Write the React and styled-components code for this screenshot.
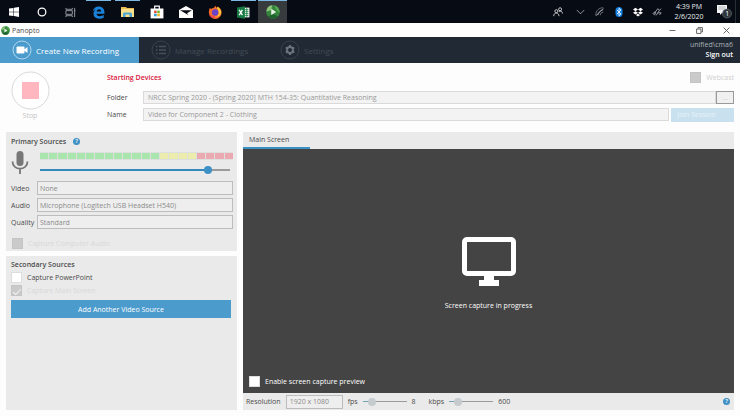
import React from "react";
import styled, { createGlobalStyle } from "styled-components";

const Global = createGlobalStyle`
  * { box-sizing: border-box; }
  body { margin: 0; background: #fdfdfd; }
  body, button, input, select {
    font-family: "Open Sans", "Noto Sans", sans-serif;
    font-size: 7px;
    color: #4a4a4a;
  }
  button { border: 0; padding: 0; background: none; }
`;

const Desktop = styled.div`
  min-height: 100vh;
  display: flex;
  flex-direction: column;
`;

/* ---- system taskbar ---- */
const Taskbar = styled.header`
  height: 23px;
  display: flex;
  background: #070c14;
`;
const TaskButton = styled.button`
  width: ${(p) => (p.$narrow ? 28 : 29)}px;
  display: grid;
  place-items: center;
  border-top: 1px solid transparent;
  border-image: ${(p) =>
    p.$active
      ? "linear-gradient(#7bb9e2, #7bb9e2) 1"
      : p.$running
      ? "linear-gradient(90deg, transparent 10%, #7bb9e2 10% 90%, transparent 90%) 1"
      : "none"};
  background: ${(p) => (p.$active ? "#373b3e" : "none")};
`;
const Tray = styled.div`
  margin-left: auto;
  display: flex;
  align-items: stretch;
`;
const TrayButton = styled.button`
  width: ${(p) => (p.$wide ? 26 : 19)}px;
  display: grid;
  place-items: center;
`;
const Clock = styled.time`
  width: 46px;
  padding-top: 2px;
  color: #e8eaec;
  line-height: 10px;
  text-align: center;
`;
const Notices = styled.button`
  width: 24px;
  display: grid;
  place-items: center;
  margin-right: 4px;
  border-right: 1px solid #2a2e35;
`;

/* ---- window chrome ---- */
const TitleBar = styled.div`
  height: 14px;
  display: flex;
  align-items: center;
  gap: 2px;
  padding: 0 9px 0 1px;
  background: #fff;
`;
const WindowButtons = styled.div`
  margin-left: auto;
  display: flex;
  gap: 17px;
`;
const WindowButton = styled.button`
  width: 10px;
  height: 10px;
  display: grid;
  place-items: center;
`;

const Nav = styled.nav`
  height: 26px;
  display: flex;
  background: #212a34;
`;
const NavTab = styled.button`
  display: flex;
  align-items: center;
  gap: 4px;
  width: ${(p) => p.$width}px;
  padding-left: 12px;
  font-size: 8px;
  background: ${(p) => (p.$active ? "#4b9bcd" : "none")};
  color: ${(p) => (p.$active ? "#fff" : "#414b55")};
`;
const Account = styled.div`
  margin-left: auto;
  padding: 3px 7px 0 0;
  display: flex;
  flex-direction: column;
  align-items: flex-end;
  color: #a9b0b7;
  line-height: 10px;
`;
const SignOut = styled.a`
  color: #fff;
  font-weight: 600;
  text-decoration: none;
`;

/* ---- recording details ---- */
const Details = styled.section`
  display: grid;
  grid-template-columns: 50px 1fr;
  column-gap: 46px;
  padding: 8px 6px 0 5px;
`;
const StopButton = styled.button`
  display: flex;
  flex-direction: column;
  align-items: center;
  gap: 1px;
  color: #c4c4c4;
`;
const DetailForm = styled.div`
  display: flex;
  flex-direction: column;
  gap: 4px;
`;
const StatusRow = styled.div`
  height: 12px;
  display: flex;
  align-items: center;
  justify-content: space-between;
  margin-bottom: 4px;
  padding-left: 6px;
`;
const Status = styled.strong`
  color: #d9173c;
  font-weight: 600;
`;
const DetailRow = styled.div`
  height: 13px;
  display: flex;
  align-items: center;
  gap: 2px;
  padding-left: 6px;
`;
const DetailLabel = styled.label`
  width: 34px;
`;
const control = `
  appearance: none;
  min-width: 0;
  height: 13px;
  margin: 0;
  padding: 0 4px;
  border: 1px solid #dadada;
  border-radius: 0;
  background: #f3f3f3;
  color: #999;
  opacity: 1;
`;
const TextBox = styled.input`
  ${control}
  flex: 1;
`;
const Picker = styled.select`
  ${control}
  flex: 1;
  margin-right: ${(p) => (p.$joined ? -2 : 0)}px;
`;
const BrowseButton = styled.button`
  width: 18px;
  height: 13px;
  border: 1px solid #999;
  background: #f0f0f0;
  color: #c8c8c8;
`;
const JoinButton = styled.button`
  width: 63px;
  height: 14px;
  padding-right: 12px;
  background: #c9e1ef;
  color: #e7f2f8;
`;

const CheckLine = styled.label`
  display: flex;
  align-items: center;
  gap: 5px;
  color: ${(p) => (p.$light ? "#fff" : p.$off ? p.$tone || "#d8d8d8" : "#4a4a4a")};
`;
const Tick = styled.input.attrs({ type: "checkbox" })`
  appearance: none;
  width: 11px;
  height: 11px;
  margin: 0;
  display: grid;
  place-items: center;
  border: 1px solid #ddd;
  background: #fff;
  &:disabled { background: #cacaca; border-color: #c4c4c4; }
  &:checked::after {
    content: "";
    width: 7px;
    height: 3px;
    border: solid #f3f3f3;
    border-width: 0 0 1px 1px;
    transform: rotate(-45deg);
  }
`;

/* ---- main area ---- */
const Workspace = styled.main`
  flex: 1;
  display: grid;
  grid-template-columns: minmax(200px, 231fr) 491fr;
  gap: 6px;
  padding: 11px 6px 6px;
`;
const Sources = styled.div`
  display: flex;
  flex-direction: column;
  gap: 5px;
`;
const Panel = styled.section`
  flex: ${(p) => (p.$grow ? 1 : "none")};
  padding: ${(p) => (p.$grow ? "3px 6px 6px 5px" : "4px 4px 2px 5px")};
  background: #eaeaea;
`;
const Heading = styled.h2`
  display: flex;
  align-items: center;
  gap: 7px;
  margin: 0;
  font-size: 7px;
  line-height: 11px;
  font-weight: 600;
`;
const AudioLevels = styled.div`
  display: grid;
  grid-template-columns: 25px 1fr;
  column-gap: 4px;
  align-items: center;
  padding-top: 4px;
  margin-bottom: 6px;
`;
const LevelColumn = styled.div`
  display: flex;
  flex-direction: column;
  gap: 5px;
`;
const Meter = styled.div`
  display: flex;
  gap: 1px;
  height: 8px;
  padding: 1px 0;
  background: #dcdfdc;
`;
const shades = { low: "#a9e6ae", mid: "#ecedac", high: "#eba9b2" };
const Segment = styled.span`
  flex: 1;
  background: ${(p) => shades[p.$level]};
`;
const Slider = styled.input.attrs({ type: "range" })`
  appearance: none;
  width: ${(p) => p.$width || "calc(100% - 3px)"};
  height: 10px;
  margin: 0;
  background: linear-gradient(
      90deg,
      ${(p) => (p.$muted ? "#73a1b8" : "#3689bd")} ${(p) => p.$fill}%,
      #9b9b9b ${(p) => p.$fill}%
    )
    center / 100% ${(p) => (p.$muted ? 1 : 2)}px no-repeat;
  &::-webkit-slider-thumb {
    appearance: none;
    width: 8px;
    height: 8px;
    border-radius: 50%;
    background: ${(p) => (p.$muted ? "#c5cbce" : "#3e91c7")};
  }
`;
const SourceRow = styled.div`
  display: grid;
  grid-template-columns: 26px 1fr;
  align-items: center;
  margin-bottom: 3px;
`;
const SourcePicker = styled(Picker)`
  height: 14px;
  padding: 0 2px;
  border-color: #bdbdbd;
  background: #eee;
  color: #8b8b8b;
`;
const SourceOption = styled.div`
  display: flex;
  padding: ${(p) => (p.$spaced ? "6px 1px 0" : "2px 0 0")};
`;
const AddButton = styled.button`
  width: 100%;
  height: 18px;
  margin-top: 4px;
  background: #4b9bcd;
  color: #fff;
`;

const Preview = styled.section`
  display: flex;
  flex-direction: column;
  background: #eaeaea;
`;
const Tabs = styled.div`
  height: 17px;
  display: flex;
`;
const ScreenTab = styled.button`
  width: 67px;
  padding-left: 6px;
  text-align: left;
  border-bottom: 2px solid #3b91c4;
`;
const Stage = styled.div`
  flex: 1;
  display: grid;
  grid-template-rows: 1fr auto;
  padding: 22px 6px 6px;
  background: #444;
  color: #fff;
`;
const StageMessage = styled.div`
  display: flex;
  flex-direction: column;
  align-items: center;
  justify-content: center;
  gap: 15px;
`;
const Settings = styled.div`
  height: 17px;
  display: flex;
  align-items: center;
  gap: 5px;
  padding: 0 4px 0 3px;
`;
const Resolution = styled(SourcePicker)`
  flex: none;
  width: 57px;
  padding: 0 3px;
`;
const Value = styled.output`
  width: 12px;
`;
const HelpButton = styled.button`
  width: 7px;
  height: 7px;
  border-radius: 50%;
  background: #3f90c4;
  color: #fff;
  font-size: 6px;
  line-height: 7px;
  font-weight: 600;
`;
const HelpEnd = styled.div`
  margin-left: auto;
  display: flex;
`;

/* ---- icons ---- */
const Icon = ({ w = 12, h = w, box = "0 0 12 12", children }) => (
  <svg width={w} height={h} viewBox={box} fill="none" aria-hidden="true">{children}</svg>
);
const WindowsIcon = () => (
  <Icon w={10} box="0 0 10 10"><path fill="#fff" d="M0 1.5 4.5.9v3.8H0zM5 .8 10 .1v4.6H5zM0 5.2h4.5V9L0 8.4zM5 5.2h5v4.7L5 9.1z" /></Icon>
);
const CircleIcon = () => <Icon w={10}><circle cx="6" cy="6" r="4.6" stroke="#fff" strokeWidth="1.5" /></Icon>;
const TaskViewIcon = () => (
  <Icon w={11}><path stroke="#9ba0a5" d="M1 1v1.5h7V1M1 11V9.5h7V11M1 4h7v4H1zM10.5 1v10M9.8 4.2h1.6" /></Icon>
);
const EdgeIcon = () => (
  <Icon w={13}><path fill="#1b82d9" d="M.6 5.4C1.200 2 3.500.4 6.200.4c3.300 0 5.300 2.400 5.300 5.400v1.300H4.200c.2 1.700 1.500 2.300 3.100 2.300 1.300 0 2.500-.4 3.500-1v2.400c-1.200.6-2.600.9-4 .9C3.600 11.700 1.400 10 1.400 7.200c0-1.800.9-3.300 2.500-4.200C2.300 3.300 1.200 4.300.6 5.400zM4.300 5h4.200c0-1.300-.7-2.100-2-2.100S4.500 3.800 4.300 5z" /></Icon>
);
const FolderIcon = () => (
  <Icon w={13} h={11} box="0 0 13 11"><path fill="#e9bd54" d="M0 0h5l1 1h7v4H0z" /><path fill="#f9e08c" d="M0 2h13v8H0z" /><path fill="#4ea5d4" d="M2 10V6.500L3 5.500h7l1 1V10H8.500V7.500h-4V10z" /></Icon>
);
const StoreIcon = () => (
  <Icon w={14}><path stroke="#fff" d="M4 3.500V1h4v2.500" /><path fill="#fff" d="M.5 3h11v8.500H.5z" /><path fill="#e55033" d="M3.500 4.800h2.200V7H3.500z" /><path fill="#72b52a" d="M6.200 4.800h2.200V7H6.200z" /><path fill="#2a9ed8" d="M3.500 7.500h2.200v2.200H3.500z" /><path fill="#f4b51d" d="M6.200 7.500h2.200v2.200H6.200z" /></Icon>
);
const MailIcon = () => (
  <Icon w={14} h={12} box="0 0 14 12"><path fill="#fff" d="M0 4 7 0l7 4v8H0z" /><path fill="#070c14" d="M1 4.200h12L8 7.300l1.700 1.900L5.800 7z" /></Icon>
);
const FirefoxIcon = () => (
  <Icon w={14}><path fill="#f56b2a" d="M1.500 2.500 2.700 3.400C3.500 2.800 4 2.600 4.800 2.500L6.500.6c.3 1 .8 1.600 1.600 2 .4-.4.3-1 .2-1.400 2.200 1.100 3.400 3.100 3.400 5.300a5.500 5.500 0 0 1-11 0c0-1.500.3-2.900.8-4z" /><circle cx="6.200" cy="6.500" r="2.800" fill="#6b43c8" /><path fill="#ffcb38" d="M7.800 1.200c2.100 1.200 3.600 3 3.400 5.500-.5 2.600-3.100 3.900-5.600 3.200 2.600-.3 4-1.700 3.600-4-.2-1.600-1.600-2.300-1.400-4.700z" /><path fill="#e53464" d="M.8 7c1 2.400 3.200 3.200 5.600 2.900C4.500 12.300 1.200 10 .8 7z" /></Icon>
);
const ExcelIcon = () => (
  <Icon w={13}><path fill="#e9f3ec" d="M6 1.500h5.500v9H6z" /><path stroke="#21834a" strokeWidth=".8" d="M7.500 3.400h3M7.500 5.200h3M7.500 7h3M7.500 8.800h3M9 2v8" /><path fill="#177943" d="M0 1.400 7.300.2v11.600L0 10.600z" /><path stroke="#fff" strokeWidth="1.200" d="m2 3.600 3 4.800M5 3.600 2 8.400" /></Icon>
);
const PanoptoIcon = ({ size }) => (
  <Icon w={size}><circle cx="6" cy="6" r="5.800" fill="#36853d" /><path fill="#8cc47a" d="M5.500.2A5.800 5.800 0 0 0 .3 5.600l4-1.200z" /><path fill="#1e602e" d="M1.500 9.700a5.800 5.800 0 0 0 8.800.2L6.500 8z" /><path fill="#55a850" d="M7 .3a5.800 5.800 0 0 1 4.700 6.300L8.800 4z" /><path fill="#e8f3e5" d="m4.500 3.300 4.200 2.800-4.200 2.500z" /></Icon>
);
const PeopleIcon = () => (
  <Icon w={10}><g stroke="#e3e5e7"><circle cx="4" cy="5" r="1.800" /><path d="M.8 11c0-5 6.400-5 6.400 0M7 5.500c2-1.500 4.300-.5 4.300 2.300" /><circle cx="8.500" cy="2.700" r="1.800" /></g></Icon>
);
const ChevronIcon = () => <Icon w={9}><path stroke="#bfc3c6" d="m1 4 5 5 5-5" /></Icon>;
const WifiIcon = () => (
  <Icon w={9}><g stroke="#858b91"><path d="M1 11C1 5 5 1 11 1M4 11c0-4 3-7 7-7M7 11c0-2.500 1.500-4 4-4" /><path stroke="#d0d3d5" d="M1 11h1l9-9" /></g></Icon>
);
const BluetoothIcon = () => (
  <Icon w={8} h={10} box="0 0 8 10"><rect width="7" height="10" x=".5" rx="3.500" fill="#1683e3" /><path stroke="#fff" strokeWidth=".8" d="m2 3 4 4-2 1.700V1.300L6 3 2 7" /></Icon>
);
const DropboxIcon = () => (
  <Icon w={10}><path fill="#fff" d="m3 1 3 2-3 2-3-2zM9 1l3 2-3 2-3-2zM3 5l3 2-3 2-3-2zM9 5l3 2-3 2-3-2zM6 8l2.500 1.600L6 11.300 3.500 9.600z" /></Icon>
);
const PenIcon = () => (
  <Icon w={10}><path stroke="#b3b7bb" d="M1 8c2-3 4-2 3 0s-2 2-1.500 0L7 2l2 2-4 6M7 7h4l-2 2.500M9 4l2-2" /></Icon>
);
const NoticeIcon = () => (
  <Icon w={16} h={15} box="0 0 16 15"><path fill="#f4f5f6" d="M1 1h10v8H6l-2 2V9H1z" /><path stroke="#8e9398" strokeWidth=".7" d="M2.500 3h7M2.500 5h7" /><circle cx="11" cy="9.500" r="4.500" fill="#30353b" stroke="#777c81" strokeWidth=".6" /><text x="9.300" y="12.200" fill="#fff" fontSize="7">1</text></Icon>
);
const NavIcon = ({ children, color }) => (
  <Icon w={20} box="0 0 20 20"><circle cx="10" cy="10" r="9" stroke={color} />{children}</Icon>
);
const MicIcon = () => (
  <Icon w={18} h={24} box="0 0 18 24"><rect x="5.500" width="7" height="15" rx="3.500" fill="#777" /><path stroke="#777" strokeWidth="1.800" d="M1.500 10.500c0 9.500 15 9.500 15 0M9 18v5" /></Icon>
);
const MonitorIcon = () => (
  <Icon w={54} h={49} box="0 0 54 49"><rect x="2.500" y="2.500" width="49" height="34" rx="2.500" stroke="#fff" strokeWidth="5" /><path fill="#fff" d="M22 38h10v5h5v6H17v-6h5z" /></Icon>
);
const StopIcon = () => (
  <Icon w={39} box="0 0 39 39"><circle cx="19.500" cy="19.500" r="18.500" fill="#fff" stroke="#d9d9d9" /><path fill="#ffb6bf" d="M11 11h17v17H11z" /></Icon>
);

const levels = [...Array(13).fill("low"), ...Array(4).fill("mid"), ...Array(4).fill("high")];
const sources = [
  ["Video", "None"],
  ["Audio", "Microphone (Logitech USB Headset H540)"],
  ["Quality", "Standard"],
];
const apps = [
  { name: "Start", icon: <WindowsIcon />, narrow: true },
  { name: "Cortana", icon: <CircleIcon />, narrow: true },
  { name: "Task View", icon: <TaskViewIcon />, narrow: true },
  { name: "Edge", icon: <EdgeIcon />, running: true },
  { name: "File Explorer", icon: <FolderIcon />, running: true },
  { name: "Store", icon: <StoreIcon /> },
  { name: "Mail", icon: <MailIcon /> },
  { name: "Firefox", icon: <FirefoxIcon /> },
  { name: "Excel", icon: <ExcelIcon />, running: true },
  { name: "Panopto", icon: <PanoptoIcon size={14} />, active: true },
];

export default function App() {
  return (
    <Desktop>
      <Global />
      <Taskbar>
        {apps.map((a) => (
          <TaskButton key={a.name} aria-label={a.name} $narrow={a.narrow} $running={a.running} $active={a.active}>{a.icon}</TaskButton>
        ))}
        <Tray>
          <TrayButton $wide aria-label="People"><PeopleIcon /></TrayButton>
          <TrayButton aria-label="Hidden icons"><ChevronIcon /></TrayButton>
          <TrayButton aria-label="Network"><WifiIcon /></TrayButton>
          <TrayButton aria-label="Bluetooth"><BluetoothIcon /></TrayButton>
          <TrayButton aria-label="Dropbox"><DropboxIcon /></TrayButton>
          <TrayButton aria-label="Pen"><PenIcon /></TrayButton>
          <Clock>4:39 PM<br />2/6/2020</Clock>
          <Notices aria-label="Notifications"><NoticeIcon /></Notices>
        </Tray>
      </Taskbar>
      <TitleBar>
        <PanoptoIcon size={9} />
        <span>Panopto</span>
        <WindowButtons>
          <WindowButton aria-label="Minimize"><Icon w={7}><path stroke="#555" strokeWidth="1.500" d="M1 6h10" /></Icon></WindowButton>
          <WindowButton aria-label="Restore"><Icon w={7}><path stroke="#555" strokeWidth="1.500" d="M1 3.500h7.500V11H1zM3.500 3V1H11v7.500H9" /></Icon></WindowButton>
          <WindowButton aria-label="Close"><Icon w={7}><path stroke="#555" strokeWidth="1.500" d="m1 1 10 10M11 1 1 11" /></Icon></WindowButton>
        </WindowButtons>
      </TitleBar>
      <Nav>
        <NavTab $active $width={139}>
          <NavIcon color="#b4d7ec"><rect x="4.500" y="6.500" width="8" height="7" rx="1" fill="#fff" /><path fill="#fff" d="m12 9.500 3.500-2.500v6L12 10.500z" /></NavIcon>
          Create New Recording
        </NavTab>
        <NavTab $width={129} disabled>
          <NavIcon color="#38424c"><path stroke="#46505a" strokeWidth="1.300" d="M5 6.500h1.500M8 6.500h7M5 10h1.500M8 10h7M5 13.500h1.500M8 13.500h7" /></NavIcon>
          Manage Recordings
        </NavTab>
        <NavTab $width={90} disabled>
          <NavIcon color="#38424c"><circle cx="10" cy="10" r="3" stroke="#69737b" strokeWidth="2" /><path stroke="#69737b" strokeWidth="2" d="M10 5v2M10 13v2M5.700 7.500l1.700 1M12.600 11.500l1.700 1M5.700 12.500l1.700-1M12.600 8.500l1.700-1" /></NavIcon>
          Settings
        </NavTab>
        <Account>
          <span>unified\cma6</span>
          <SignOut href="#signout">Sign out</SignOut>
        </Account>
      </Nav>
      <Details>
        <StopButton disabled><StopIcon />Stop</StopButton>
        <DetailForm>
          <StatusRow>
            <Status>Starting Devices</Status>
            <CheckLine $off $tone="#cecece"><Tick disabled />Webcast</CheckLine>
          </StatusRow>
          <DetailRow>
            <DetailLabel htmlFor="folder">Folder</DetailLabel>
            <Picker id="folder" disabled $joined><option>NRCC Spring 2020 - (Spring 2020] MTH 154-35: Quantitative Reasoning</option></Picker>
            <BrowseButton disabled aria-label="Browse folders">...</BrowseButton>
          </DetailRow>
          <DetailRow>
            <DetailLabel htmlFor="name">Name</DetailLabel>
            <TextBox id="name" disabled defaultValue="Video for Component 2 - Clothing" />
            <JoinButton disabled>Join Session</JoinButton>
          </DetailRow>
        </DetailForm>
      </Details>
      <Workspace>
        <Sources>
          <Panel>
            <Heading>Primary Sources <HelpButton aria-label="Help with sources">?</HelpButton></Heading>
            <AudioLevels>
              <MicIcon />
              <LevelColumn>
                <Meter>{levels.map((level, i) => <Segment key={i} $level={level} />)}</Meter>
                <Slider aria-label="Microphone volume" defaultValue={90} $fill={88} />
              </LevelColumn>
            </AudioLevels>
            {sources.map(([label, value]) => (
              <SourceRow key={label}>
                <label htmlFor={label}>{label}</label>
                <SourcePicker id={label} disabled><option>{value}</option></SourcePicker>
              </SourceRow>
            ))}
            <SourceOption $spaced><CheckLine $off><Tick disabled />Capture Computer Audio</CheckLine></SourceOption>
          </Panel>
          <Panel $grow>
            <Heading>Secondary Sources</Heading>
            <SourceOption><CheckLine><Tick />Capture PowerPoint</CheckLine></SourceOption>
            <SourceOption><CheckLine $off><Tick disabled defaultChecked />Capture Main Screen</CheckLine></SourceOption>
            <AddButton>Add Another Video Source</AddButton>
          </Panel>
        </Sources>
        <Preview>
          <Tabs><ScreenTab>Main Screen</ScreenTab></Tabs>
          <Stage>
            <StageMessage><MonitorIcon /><span>Screen capture in progress</span></StageMessage>
            <CheckLine $light><Tick />Enable screen capture preview</CheckLine>
          </Stage>
          <Settings>
            <label htmlFor="resolution">Resolution</label>
            <Resolution id="resolution" disabled><option>1920 x 1080</option></Resolution>
            <label htmlFor="fps">fps</label>
            <Slider id="fps" $muted $width="44px" $fill={14} defaultValue={14} />
            <Value htmlFor="fps">8</Value>
            <label htmlFor="kbps">kbps</label>
            <Slider id="kbps" $muted $width="44px" $fill={12} defaultValue={12} />
            <Value htmlFor="kbps">600</Value>
            <HelpEnd><HelpButton aria-label="Help with resolution">?</HelpButton></HelpEnd>
          </Settings>
        </Preview>
      </Workspace>
    </Desktop>
  );
}
